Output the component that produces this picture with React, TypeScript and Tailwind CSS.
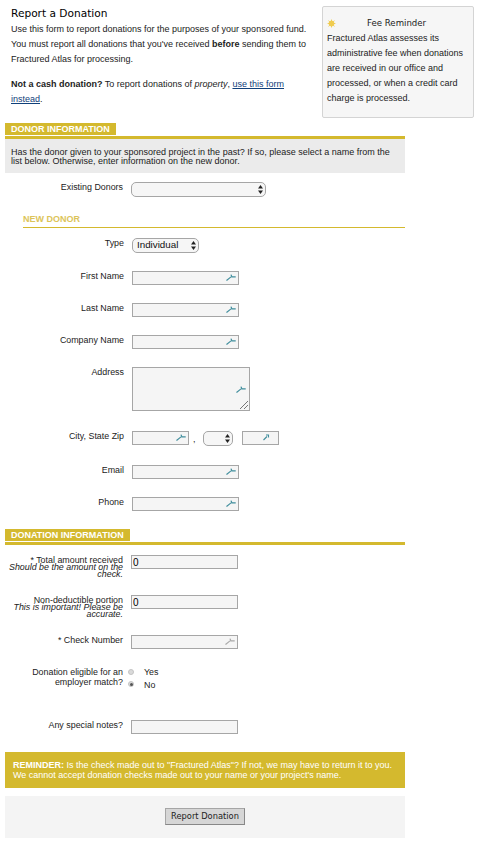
const Wrench = ({
  gray = false,
  up = false,
  className = 'right-[3px] top-[2px]',
}: {
  gray?: boolean;
  up?: boolean;
  className?: string;
}) => (
  <svg
    viewBox="0 0 10 8"
    className={`absolute w-[10px] h-[8px] ${className}`}
    fill="none"
    stroke={gray ? '#a8a8a8' : '#3f8d9c'}
    strokeWidth="1.1"
  >
    {up ? (
      <>
        <path d="M2.5 7 L6 3.5" />
        <path d="M5 2 H7.5 V4.5" strokeWidth="1.1" />
      </>
    ) : (
      <>
        <path d="M0.5 7.5 L5 3.8" />
        <path d="M5 1.6 L5.8 3.8 L9.7 3.8" strokeWidth="1.2" />
      </>
    )}
  </svg>
);

const Arrows = () => (
  <svg viewBox="0 0 5 9" className="absolute right-[3px] top-[3px] w-[5px] h-[9px] pointer-events-none" fill="#222">
    <path d="M2.5 0 L5 3.6 H0 Z" />
    <path d="M2.5 9 L5 5.4 H0 Z" />
  </svg>
);

const Input = ({
  width,
  value,
  icon = true,
  gray = false,
  up = false,
  iconClass,
}: {
  width: string;
  value?: string;
  icon?: boolean;
  gray?: boolean;
  up?: boolean;
  iconClass?: string;
}) => (
  <div className={`relative ${width} h-[14px] shrink-0`}>
    <input
      readOnly
      value={value ?? ''}
      className="block w-full h-full border border-[#a6a6a6] bg-[#f5f5f5] px-px text-[10px] leading-none text-black outline-none"
    />
    {icon && <Wrench gray={gray} up={up} className={iconClass} />}
  </div>
);

const Select = ({ width, label }: { width: string; label?: string }) => (
  <div className={`relative ${width} h-[15px] shrink-0`}>
    <div className="w-full h-full rounded-[5px] border border-[#a6a6a6] bg-[#f6f6f6] pl-1 text-[9.8px] leading-[12px] text-[#111]">
      {label}
    </div>
    <Arrows />
  </div>
);

const Row = ({
  label,
  top,
  children,
  labelWidth = 'w-[119px]',
  gap = 'ml-[8px]',
}: {
  label: string;
  top: string;
  children: React.ReactNode;
  labelWidth?: string;
  gap?: string;
}) => (
  <div className={`flex items-start ${top}`}>
    <div className={`${labelWidth} -mt-px text-right text-[8.9px] leading-[12px] text-[#222] shrink-0`}>{label}</div>
    <div className={gap}>{children}</div>
  </div>
);

const SectionHead = ({ title, width }: { title: string; width: string }) => (
  <div>
    <div className={`${width} h-[12px] bg-[#d4b92e] pl-[6px] text-[9px] leading-[12px] font-bold whitespace-nowrap text-white`}>
      {title}
    </div>
    <div className="h-[3px] mt-px bg-[#d4b92e]" />
  </div>
);

const DonationRow = ({
  label,
  note,
  top,
  value,
  height = 'h-[14px]',
}: {
  label: string;
  note?: string;
  top: string;
  value?: string;
  height?: string;
}) => (
  <div className={`flex items-start ${top} ${height}`}>
    <div className="w-[118px] text-right text-[8.9px] text-[#222] shrink-0">
      <div className="leading-[11px]">{label}</div>
      {note && <div className="italic leading-[7px] -mt-[2px]">{note}</div>}
    </div>
    <div className="ml-[8px]">
      {value !== undefined ? <Input width="w-[107px]" value={value} icon={false} /> : <Input width="w-[107px]" gray />}
    </div>
  </div>
);

export default function App() {
  return (
    <div className='font-["Liberation_Sans",Arial,sans-serif] w-[483px] h-[847px] bg-white text-[#222] overflow-hidden'>
      <div className="flex items-start h-[123px]">
        <div className="w-[322px] shrink-0 pl-[11px] pr-[10px] pt-[6px]">
          <h1 className='font-["DejaVu_Sans",sans-serif] text-[10.6px] leading-[14px] font-normal text-black'>
            Report a Donation
          </h1>
          <p className="mt-[2px] text-[9px] leading-[15px]">
            Use this form to report donations for the purposes of your sponsored fund. You must report all donations
            that you've received <b>before</b> sending them to Fractured Atlas for processing.
          </p>
          <p className="mt-[10px] text-[9px] leading-[15px]">
            <b>Not a cash donation?</b> To report donations of <i>property</i>,{' '}
            <a className="underline text-[#10407a]">use this form instead</a>.
          </p>
        </div>
        <div className="mt-[6px] w-[152px] h-[112px] shrink-0 rounded-[2px] border border-[#d4d4d4] bg-[#f6f6f6] px-[4px] pt-[12px] text-[9px] leading-[15px]">
          <div className="flex items-center h-[9px]">
            <svg viewBox="0 0 10 10" className="w-[9px] h-[9px] shrink-0" fill="#f0cc50">
              <circle cx="5" cy="5" r="3" />
              <path d="M5 0 L6.2 3 H3.8 Z M5 10 L6.2 7 H3.8 Z M0 5 L3 3.8 V6.2 Z M10 5 L7 3.8 V6.2 Z M1 1 L4 3 L3 4 Z M9 9 L6 7 L7 6 Z M9 1 L7 4 L6 3 Z M1 9 L3 6 L4 7 Z" />
            </svg>
            <span className='ml-[31px] font-["DejaVu_Sans",sans-serif] text-[8.6px] whitespace-nowrap text-[#222]'>
              Fee Reminder
            </span>
          </div>
          <p className="mt-[3px]">
            Fractured Atlas assesses its administrative fee when donations are received in our office and processed, or
            when a credit card charge is processed.
          </p>
        </div>
      </div>

      <div className="ml-[5px] w-[400px]">
        <SectionHead title="DONOR INFORMATION" width="w-[111px]" />
        <div className="h-[34px] bg-[#ebebeb] px-[6px] pt-[9px] text-[9px] leading-[9px]">
          Has the donor given to your sponsored project in the past? If so, please select a name from the list below.
          Otherwise, enter information on the new donor.
        </div>

        <Row label="Existing Donors" top="mt-[9px]" labelWidth="w-[118px]" gap="ml-[8px]">
          <Select width="w-[135px]" />
        </Row>

        <div className="ml-[18px] mt-[17px] h-[14px] border-b border-[#d4b92e] text-[9px] leading-[11px] font-bold text-[#dcc45a]">
          NEW DONOR
        </div>

        <Row label="Type" top="mt-[10px]">
          <Select width="w-[67px]" label="Individual" />
        </Row>
        <Row label="First Name" top="mt-[18px]">
          <Input width="w-[107px]" />
        </Row>
        <Row label="Last Name" top="mt-[18px]">
          <Input width="w-[107px]" />
        </Row>
        <Row label="Company Name" top="mt-[18px]">
          <Input width="w-[107px]" />
        </Row>
        <Row label="Address" top="mt-[18px]">
          <div className="relative w-[118px] h-[44px] border border-[#a6a6a6] bg-[#f5f5f5]">
            <Wrench className="right-[3px] top-[17px]" />
            <svg viewBox="0 0 8 8" className="absolute right-px bottom-px w-[8px] h-[8px]" stroke="#555" strokeWidth="0.8">
              <path d="M0 8 L8 0 M4 8 L8 4" />
            </svg>
          </div>
        </Row>
        <Row label="City, State Zip" top="mt-[20px]">
          <div className="flex items-start">
            <Input width="w-[57px]" />
            <span className="ml-[4px] w-[10px] text-[9px] leading-[16px]">,</span>
            <Select width="w-[30px]" />
            <div className="ml-[9px]">
              <Input width="w-[37px]" up iconClass="right-[8px] top-[2px]" />
            </div>
          </div>
        </Row>
        <Row label="Email" top="mt-[18px]">
          <Input width="w-[107px]" />
        </Row>
        <Row label="Phone" top="mt-[18px]">
          <Input width="w-[107px]" />
        </Row>

        <div className="mt-[18px]">
          <SectionHead title="DONATION INFORMATION" width="w-[125px]" />
        </div>

        <DonationRow
          label="* Total amount received"
          note="Should be the amount on the check."
          top="mt-[10px]"
          height="h-[26px]"
          value="0"
        />
        <DonationRow
          label="Non-deductible portion"
          note="This is important! Please be accurate."
          top="mt-[14px]"
          height="h-[26px]"
          value="0"
        />
        <DonationRow label="* Check Number" top="mt-[14px]" />

        <div className="flex items-start mt-[17px] h-[24px]">
          <div className="w-[118px] shrink-0 text-right text-[8.9px] leading-[10px] pt-px">
            Donation eligible for an employer match?
          </div>
          <div className="ml-[5px] text-[8.9px]">
            <div className="flex items-center h-[12px]">
              <span className="w-[6px] h-[6px] rounded-full bg-[#dadada] border border-[#c4c4c4]" />
              <span className="ml-[10px] leading-[12px]">Yes</span>
            </div>
            <div className="flex items-center h-[12px]">
              <span className="w-[6px] h-[6px] rounded-full bg-[#dadada] border border-[#c4c4c4] flex items-center justify-center">
                <span className="w-[3px] h-[3px] rounded-full bg-[#555]" />
              </span>
              <span className="ml-[10px] leading-[12px] pt-[2px]">No</span>
            </div>
          </div>
        </div>

        <DonationRow label="Any special notes?" top="mt-[30px]" value="" />

        <div className="mt-[18px] h-[36px] bg-[#d4b92e] px-[8px] pt-[8px] text-[9px] leading-[10px] text-white">
          <b>REMINDER:</b> Is the check made out to "Fractured Atlas"? If not, we may have to return it to you. We cannot
          accept donation checks made out to your name or your project's name.
        </div>

        <div className="mt-[8px] h-[42px] bg-[#f4f4f4] flex justify-center pt-[12px]">
          <button className='w-[80px] h-[17px] bg-[#d6d6d6] border border-[#a6a6a6] border-b-[#888] border-r-[#888] font-["DejaVu_Sans",sans-serif] text-[8.3px] leading-none text-[#222]'>
            Report Donation
          </button>
        </div>
      </div>
    </div>
  );
}
